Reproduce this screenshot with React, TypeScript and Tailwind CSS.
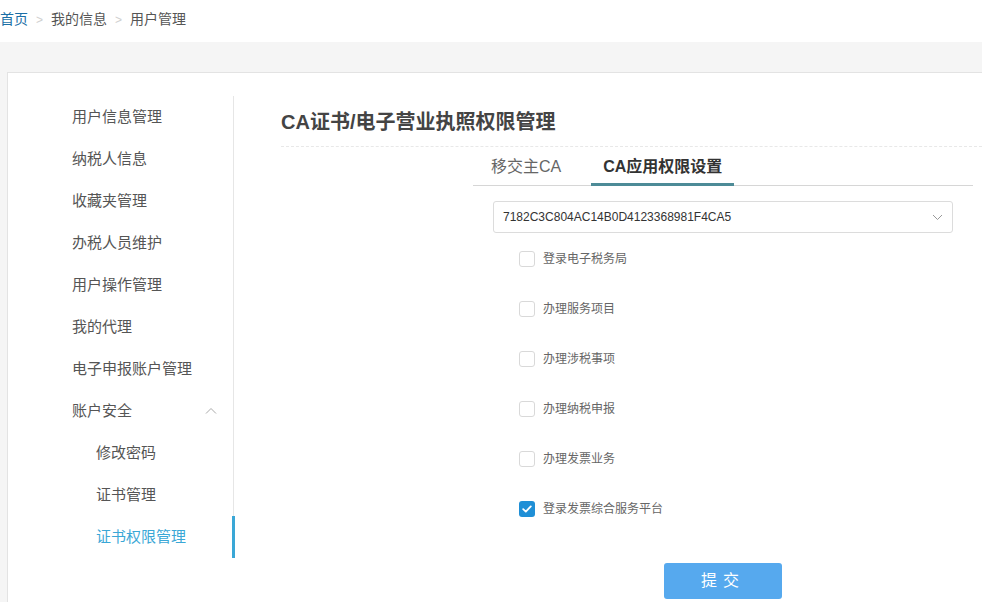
import React, { useState } from "react";

const font = { fontFamily: '"Liberation Sans", "Noto Sans CJK SC", sans-serif' };

const menu = ["用户信息管理", "纳税人信息", "收藏夹管理", "办税人员维护", "用户操作管理", "我的代理", "电子申报账户管理"];
const subMenu = ["修改密码", "证书管理", "证书权限管理"];

const perms = [
  { label: "登录电子税务局", checked: false },
  { label: "办理服务项目", checked: false },
  { label: "办理涉税事项", checked: false },
  { label: "办理纳税申报", checked: false },
  { label: "办理发票业务", checked: false },
  { label: "登录发票综合服务平台", checked: true },
];

function Checkbox({ checked, onClick }: { checked: boolean; onClick: () => void }) {
  return (
    <span
      onClick={onClick}
      className={
        checked
          ? "flex h-[16px] w-[16px] items-center justify-center rounded-[3px] bg-[#1f8fd6]"
          : "h-[16px] w-[16px] rounded-[3px] border border-[#d9d9d9] bg-white"
      }
    >
      {checked && (
        <svg width="10" height="8" viewBox="0 0 10 8" fill="none">
          <path d="M1.2 4.2 L3.8 6.6 L8.8 1.4" stroke="white" strokeWidth="1.8" strokeLinecap="round" strokeLinejoin="round" />
        </svg>
      )}
    </span>
  );
}

export default function App() {
  const [items, setItems] = useState(perms);

  return (
    <div className="h-[602px] w-[982px] overflow-hidden bg-[#f5f5f5]" style={font}>
      {/* breadcrumb */}
      <div className="flex h-[42px] items-center bg-white pb-[3px] text-[14px]">
        <span className="text-[#1b6fa6]">首页</span>
        <span className="mx-[8px] text-[12px] text-[#cfcfcf]">&gt;</span>
        <span className="text-[#555]">我的信息</span>
        <span className="mx-[8px] text-[12px] text-[#cfcfcf]">&gt;</span>
        <span className="text-[#555]">用户管理</span>
      </div>

      <div className="pl-[7px] pt-[30px]">
        <div className="flex h-[540px] border-l border-t border-[#e3e3e3] bg-white">
          {/* sidebar */}
          <div className="mt-[23px] w-[226px] self-start border-r border-[#e6e6e6] text-[15px] text-[#555]">
            {menu.map((m) => (
              <div key={m} className="flex h-[42px] items-center pl-[64px]">
                {m}
              </div>
            ))}
            <div className="flex h-[42px] items-center justify-between pl-[64px] pr-[16px]">
              <span>账户安全</span>
              <svg width="12" height="8" viewBox="0 0 12 8" fill="none">
                <path d="M1 6.5 L6 1.5 L11 6.5" stroke="#aaa" strokeWidth="1" />
              </svg>
            </div>
            {subMenu.map((m, i) => {
              const active = i === subMenu.length - 1;
              return (
                <div
                  key={m}
                  className={
                    active
                      ? "-mr-[2px] flex h-[42px] items-center border-r-[3px] border-[#3aa7d6] pl-[88px] text-[#3aa7d6]"
                      : "flex h-[42px] items-center pl-[88px]"
                  }
                >
                  {m}
                </div>
              );
            })}
          </div>

          {/* main */}
          <div className="flex-1 pl-[47px] pt-[35px]">
            <div className="text-[20px] font-bold leading-[28px] text-[#444]">CA证书/电子营业执照权限管理</div>
            <div className="mt-[10px] border-t border-dashed border-[#e8e8e8]" />

            <div className="ml-[192px] w-[500px]">
              <div className="flex border-b border-[#d6d6d6] text-[16px]">
                <div className="pb-[6px] pl-[18px] pr-[30px] pt-[8px] text-[#666]">移交主CA</div>
                <div className="-mb-[1px] border-b-[3px] border-[#4d8b97] px-[12px] pb-[4px] pt-[8px] font-bold text-[#333]">
                  CA应用权限设置
                </div>
              </div>

              <div className="ml-[20px] mt-[15px] flex h-[32px] w-[460px] items-center justify-between rounded-[3px] border border-[#dcdcdc] pl-[9px] pr-[9px] text-[12px] text-[#333]">
                <span>7182C3C804AC14B0D4123368981F4CA5</span>
                <svg width="11" height="7" viewBox="0 0 11 7" fill="none">
                  <path d="M1 1 L5.5 5.5 L10 1" stroke="#999" strokeWidth="1" />
                </svg>
              </div>

              <div className="ml-[46px] mt-[1px]">
                {items.map((p, i) => (
                  <div key={p.label} className="flex h-[50px] items-center gap-[8px] text-[12px] text-[#666]">
                    <Checkbox
                      checked={p.checked}
                      onClick={() => setItems(items.map((x, j) => (j === i ? { ...x, checked: !x.checked } : x)))}
                    />
                    <span>{p.label}</span>
                  </div>
                ))}
              </div>

              <button className="ml-[191px] mt-[29px] h-[36px] w-[118px] rounded-[3px] bg-[#56a9ee] text-[16px] tracking-[6px] text-white">
                提交
              </button>
            </div>
          </div>
        </div>
      </div>
    </div>
  );
}
